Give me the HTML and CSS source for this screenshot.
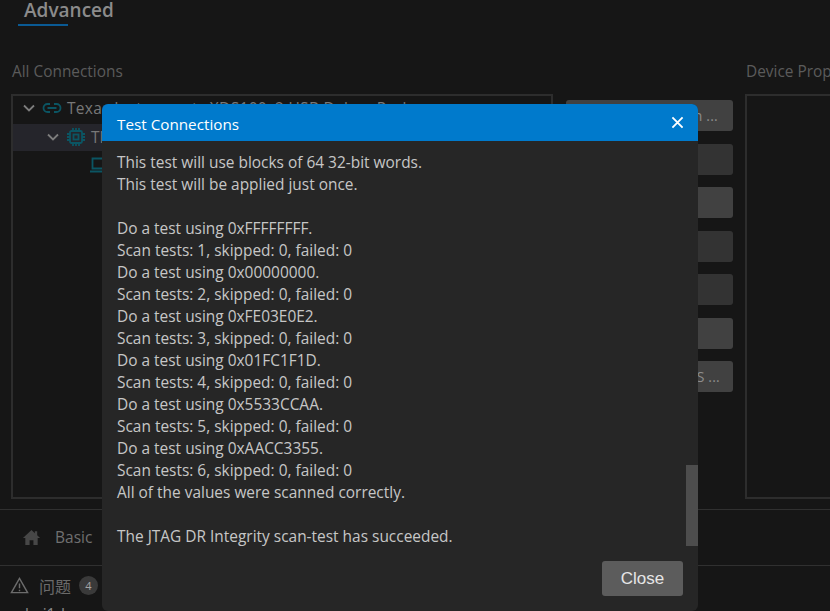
FILE: index.html
```html
<!DOCTYPE html>
<html lang="en">
<head>
<meta charset="utf-8">
<title>Test Connections</title>
<link rel="stylesheet" href="styles.css">
</head>
<body>
<div class="page">
  <header class="tabs">
    <div class="tab">Advanced</div>
  </header>
  <main class="main">
    <section class="connections">
      <h2 class="label">All Connections</h2>
      <div class="workspace">
        <div class="tree">
          <div class="row row-probe">
            <svg class="chev" viewBox="0 0 16 16"><path d="M3 5.500l5 5 5-5"/></svg>
            <svg class="ico" viewBox="0 0 20 20"><path d="M8 6H5.500a4 4 0 0 0 0 8H8M12 6h2.500a4 4 0 0 1 0 8H12M5.500 10h9"/></svg>
            <span class="row-text">Texas Instruments XDS100v2 USB Debug Probe</span>
          </div>
          <div class="row row-chip">
            <svg class="chev" viewBox="0 0 16 16"><path d="M3 5.500l5 5 5-5"/></svg>
            <svg class="ico" viewBox="0 0 20 20"><rect x="4" y="4" width="12" height="12" rx="1.500"/><rect x="7.500" y="7.500" width="5" height="5"/><path d="M7 1v3M10 1v3M13 1v3M7 16v3M10 16v3M13 16v3M1 7h3M1 10h3M1 13h3M16 7h3M16 10h3M16 13h3"/></svg>
            <span class="row-text">TMS320F28069</span>
          </div>
          <div class="row row-core">
            <svg class="ico" viewBox="0 0 20 20"><path d="M2.500 3.500h11v10h-11zM0 16.500h16"/></svg>
            <span class="row-text">C28xx_0</span>
          </div>
        </div>
        <div class="actions">
          <button class="action">Test Connection ...</button>
          <button class="action off"></button>
          <button class="action"></button>
          <button class="action off"></button>
          <button class="action off"></button>
          <button class="action"></button>
          <button class="action action-long">Reset Pins ...S ...</button>
        </div>
      </div>
    </section>
    <section class="props">
      <h2 class="label">Device Properties</h2>
      <div class="props-box"></div>
    </section>
  </main>
  <nav class="basic">
    <svg class="home" viewBox="0 0 20 20"><path d="M10 2L1 10.500h2.500V18H8v-5h4v5h4.500v-7.500H19l-3-2.800V3.500h-2.500v1.900z"/></svg>
    <span>Basic</span>
  </nav>
  <footer class="problems">
    <div class="problems-head">
      <svg class="warn" viewBox="0 0 20 20"><path d="M10 2.500L1.500 17.500h17zM10 8v5M10 14.500v1.500"/></svg>
      <span class="problems-title">问题</span>
      <span class="badge">4</span>
    </div>
    <div class="problems-line">kui1dong</div>
  </footer>
</div>
<div class="modal" role="dialog">
  <div class="modal-head">
    <span>Test Connections</span>
    <svg class="close-x" viewBox="0 0 14 14"><path d="M1.500 1.500l11 11M12.500 1.500l-11 11"/></svg>
  </div>
  <div class="modal-body">
    <div>This test will use blocks of 64 32-bit words.</div>
    <div>This test will be applied just once.</div>
    <div class="blank"></div>
    <div>Do a test using 0xFFFFFFFF.</div>
    <div>Scan tests: 1, skipped: 0, failed: 0</div>
    <div>Do a test using 0x00000000.</div>
    <div>Scan tests: 2, skipped: 0, failed: 0</div>
    <div>Do a test using 0xFE03E0E2.</div>
    <div>Scan tests: 3, skipped: 0, failed: 0</div>
    <div>Do a test using 0x01FC1F1D.</div>
    <div>Scan tests: 4, skipped: 0, failed: 0</div>
    <div>Do a test using 0x5533CCAA.</div>
    <div>Scan tests: 5, skipped: 0, failed: 0</div>
    <div>Do a test using 0xAACC3355.</div>
    <div>Scan tests: 6, skipped: 0, failed: 0</div>
    <div>All of the values were scanned correctly.</div>
    <div class="blank"></div>
    <div>The JTAG DR Integrity scan-test has succeeded.</div>
    <div class="scrollbar"></div>
  </div>
  <div class="modal-foot">
    <button class="close-btn">Close</button>
  </div>
</div>
</body>
</html>
```
FILE: styles.css
```css
* { box-sizing: border-box; }
html, body { margin: 0; height: 100%; overflow: hidden; background: #161616; }
body { font-family: "Open Sans", "Noto Sans CJK SC", sans-serif; position: relative; }
.page { height: 611px; display: flex; flex-direction: column; overflow: hidden; }

.tabs { height: 45px; padding-left: 18px; flex: none; }
.tab {
  width: 50px; height: 26px; padding-left: 6px; white-space: nowrap;
  border-bottom: 2px solid #0a5a94;
  font-size: 19px; font-weight: 600; color: #8b8b8b; line-height: 21px;
}

.main { flex: none; height: 465px; display: flex; gap: 12px; padding-left: 11px; border-bottom: 1px solid #303030; }
.connections { flex: none; width: 722px; }
.props { flex: 1; min-width: 0; }
.label {
  margin: 0; height: 49px; padding: 16px 0 0 1px; white-space: nowrap; overflow: hidden;
  font-size: 15.400px; line-height: 21px; font-weight: 400; color: #5b5b5b;
}
.workspace { display: flex; gap: 13px; height: 405px; }
.tree { width: 542px; border: 2px solid #2d2d2d; flex: none; }
.props-box { height: 405px; margin-right: -12px; border: 2px solid #2d2d2d; }

.row { height: 27.500px; display: flex; align-items: center; color: #787878; font-size: 15.500px; white-space: nowrap; overflow: hidden; }
.row-probe { padding: 0 0 3px 8px; gap: 5px; letter-spacing: .3px; }
.row-chip { padding-left: 32px; gap: 5px; background: #25252b; }
.row-core { padding-left: 77px; gap: 6px; }
.chev { width: 16px; height: 16px; fill: none; stroke: #7d7d7d; stroke-width: 1.800; flex: none; }
.ico { width: 20px; height: 20px; fill: none; stroke: #0b5563; stroke-width: 1.800; flex: none; }

.actions { width: 167px; flex: none; display: flex; flex-direction: column; gap: 12.500px; padding-top: 6px; }
.action {
  height: 31px; border: 0; border-radius: 3px; background: #414141; flex: none;
  color: #8d8d8d; font: 14px "Open Sans", sans-serif; letter-spacing: .2px; text-align: right; padding: 0 15px;
  white-space: nowrap; overflow: hidden;
}
.action.off { background: #333333; }
.action-long { padding-right: 13px; }

.basic { flex: none; height: 56px; display: flex; align-items: center; padding: 0 0 1px 22px; gap: 14px; border-bottom: 1px solid #303030; color: #707070; font-size: 15.500px; }
.home { width: 19px; height: 19px; fill: #474747; flex: none; }

.problems { flex: 1; padding-left: 10px; min-height: 0; }
.problems-head { height: 39px; display: flex; align-items: center; gap: 10px; }
.warn { width: 19px; height: 19px; fill: none; stroke: #6c6c6c; stroke-width: 1.500; flex: none; }
.problems-title { font-size: 16px; color: #6a6a6a; }
.badge {
  width: 19px; height: 19px; margin-left: -2px; border-radius: 50%; background: #3a3a3a;
  color: #a5a5a5; font-size: 11px; line-height: 19px; text-align: center;
}
.problems-line { padding-left: 15px; color: #8a8a8a; font-size: 15.500px; line-height: 18px; }

.modal {
  position: absolute; left: 102px; top: 104px; width: 596px; height: 507px;
  display: flex; flex-direction: column; background: #262626; border-radius: 6px; overflow: hidden;
}
.modal-head {
  flex: none; height: 37px; padding: 2px 14px 0 15px; background: #007acc; color: #fff;
  display: flex; align-items: center; justify-content: space-between; font-size: 15.250px;
}
.close-x { width: 13px; height: 13px; margin-top: -2px; fill: none; stroke: #fff; stroke-width: 2; }
.modal-body {
  flex: none; height: 405px; position: relative; padding: 10px 15px 0; overflow: hidden;
  color: #c6c6c6; font-size: 15.450px; line-height: 22px;
}
.blank { height: 22px; }
.scrollbar { position: absolute; right: 0; top: 324px; width: 12px; height: 81px; background: #4d4d4d; }
.modal-foot { flex: none; height: 65px; padding: 15px 15px 0 0; display: flex; justify-content: flex-end; align-items: flex-start; }
.close-btn {
  width: 81px; height: 35px; border: 0; border-radius: 3px; background: #5c5c5c; color: #e6e6e6;
  font: 17px "Liberation Sans", Arial, sans-serif; padding: 0;
}
```
